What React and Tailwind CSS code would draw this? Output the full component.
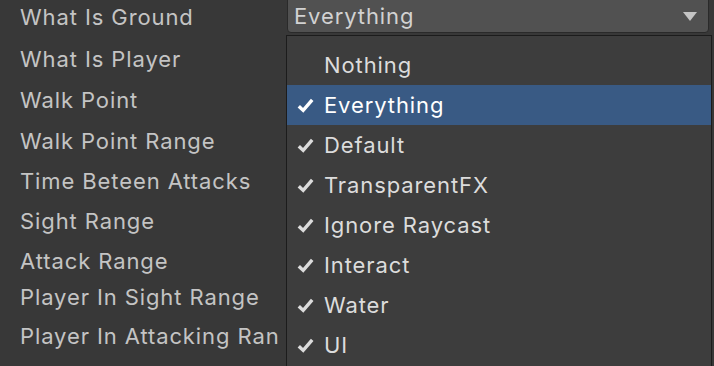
import React from 'react';

const labels = [
  { text: 'What Is Ground', h: 'h-[38px] pb-[4px]' },
  { text: 'What Is Player', h: 'h-[42px]' },
  { text: 'Walk Point', h: 'h-[41px]' },
  { text: 'Walk Point Range', h: 'h-[41px]' },
  { text: 'Time Beteen Attacks', h: 'h-[38px]' },
  { text: 'Sight Range', h: 'h-[42px]' },
  { text: 'Attack Range', h: 'h-[38px]' },
  { text: 'Player In Sight Range', h: 'h-[34px]' },
  { text: 'Player In Attacking Range', h: 'h-[44px]' },
];

const layers = [
  { name: 'Nothing', checked: false },
  { name: 'Everything', checked: true, active: true },
  { name: 'Default', checked: true },
  { name: 'TransparentFX', checked: true },
  { name: 'Ignore Raycast', checked: true },
  { name: 'Interact', checked: true },
  { name: 'Water', checked: true },
  { name: 'UI', checked: true },
];

function Check() {
  return (
    <svg width="17" height="15" viewBox="0 0 17 15" className="shrink-0">
      <path d="M1.8 8.2 L6.2 12.4 L15.2 1.8" fill="none" stroke="currentColor" strokeWidth="3.4" strokeLinejoin="miter" />
    </svg>
  );
}

export default function App() {
  return (
    <div className="relative w-[714px] h-[366px] overflow-hidden bg-[#383838] font-['Inter',sans-serif] text-[22px] tracking-[0.9px]">
      <div className="flex">
        <div className="w-[282px] pl-[20px] pr-[3px] flex flex-col text-[#c4c4c4] whitespace-nowrap">
          {labels.map((l, i) => (
            <div key={i} className={`${l.h} flex items-center overflow-hidden`}>{l.text}</div>
          ))}
        </div>
        <div className="pl-[5px] flex-1 pr-[5px]">
          <div className="h-[34px] -mt-[1px] flex items-center justify-between bg-[#515151] border border-[#2a2a2a] rounded-b-[4px] pl-[6px] pr-[11px] text-[#d2d2d2]">
            <span>Everything</span>
            <svg width="14" height="9" viewBox="0 0 14 9">
              <path d="M0 0 H14 L7 9 Z" fill="#c4c4c4" />
            </svg>
          </div>
        </div>
      </div>

      <div className="absolute left-[286px] top-[35px] w-[426px] h-[360px] bg-[#3d3d3d] border border-[#1c1c1c] pt-[9px]">
        {layers.map((l) => (
          <div
            key={l.name}
            className={`h-[40px] flex items-center gap-[10px] pl-[9px] ${l.active ? 'bg-[#395a84] text-white' : 'text-[#dcdcdc]'}`}
          >
            <span className="w-[18px] flex justify-center">{l.checked ? <Check /> : null}</span>
            <span>{l.name}</span>
          </div>
        ))}
      </div>
    </div>
  );
}
